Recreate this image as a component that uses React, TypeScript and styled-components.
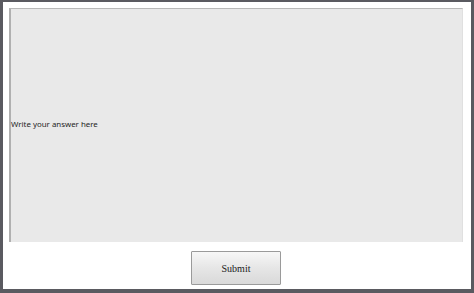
import React from "react";
import styled, { createGlobalStyle } from "styled-components";

const Global = createGlobalStyle`
  html, body { margin: 0; padding: 0; background: #ffffff; }
  * { box-sizing: border-box; }
`;

const Frame = styled.div`
  width: 474px;
  height: 293px;
  border-style: solid;
  border-color: #5a5a60;
  border-width: 2px 3px 4px 3px;
  background: #ffffff;
  display: flex;
  flex-direction: column;
  align-items: stretch;
  padding: 6px 8px 0 6px;
`;

const AnswerBox = styled.div`
  height: 234px;
  background: #e9e9e9;
  border-top: 1px solid #b8b8b8;
  border-left: 2px solid #b0b0b0;
  border-right: 1px solid #e0e0e0;
  display: flex;
  align-items: center;
  padding-bottom: 3px;
  font-family: "Noto Sans", "Open Sans", sans-serif;
  font-size: 7.9px;
  color: #1e1e1e;
`;

const Actions = styled.div`
  display: flex;
  justify-content: center;
  padding-top: 9px;
`;

const SubmitButton = styled.button`
  width: 90px;
  height: 34px;
  border: 1px solid #9a9a9a;
  border-radius: 1px;
  background: linear-gradient(#f7f7f7, #e6e6e6 50%, #d9d9d9);
  font-family: "Liberation Serif", "Times New Roman", serif;
  font-size: 10px;
  color: #1a1a1a;
  padding: 0;
`;

export default function App() {
  return (
    <>
      <Global />
      <Frame>
        <AnswerBox>Write your answer here</AnswerBox>
        <Actions>
          <SubmitButton>Submit</SubmitButton>
        </Actions>
      </Frame>
    </>
  );
}
